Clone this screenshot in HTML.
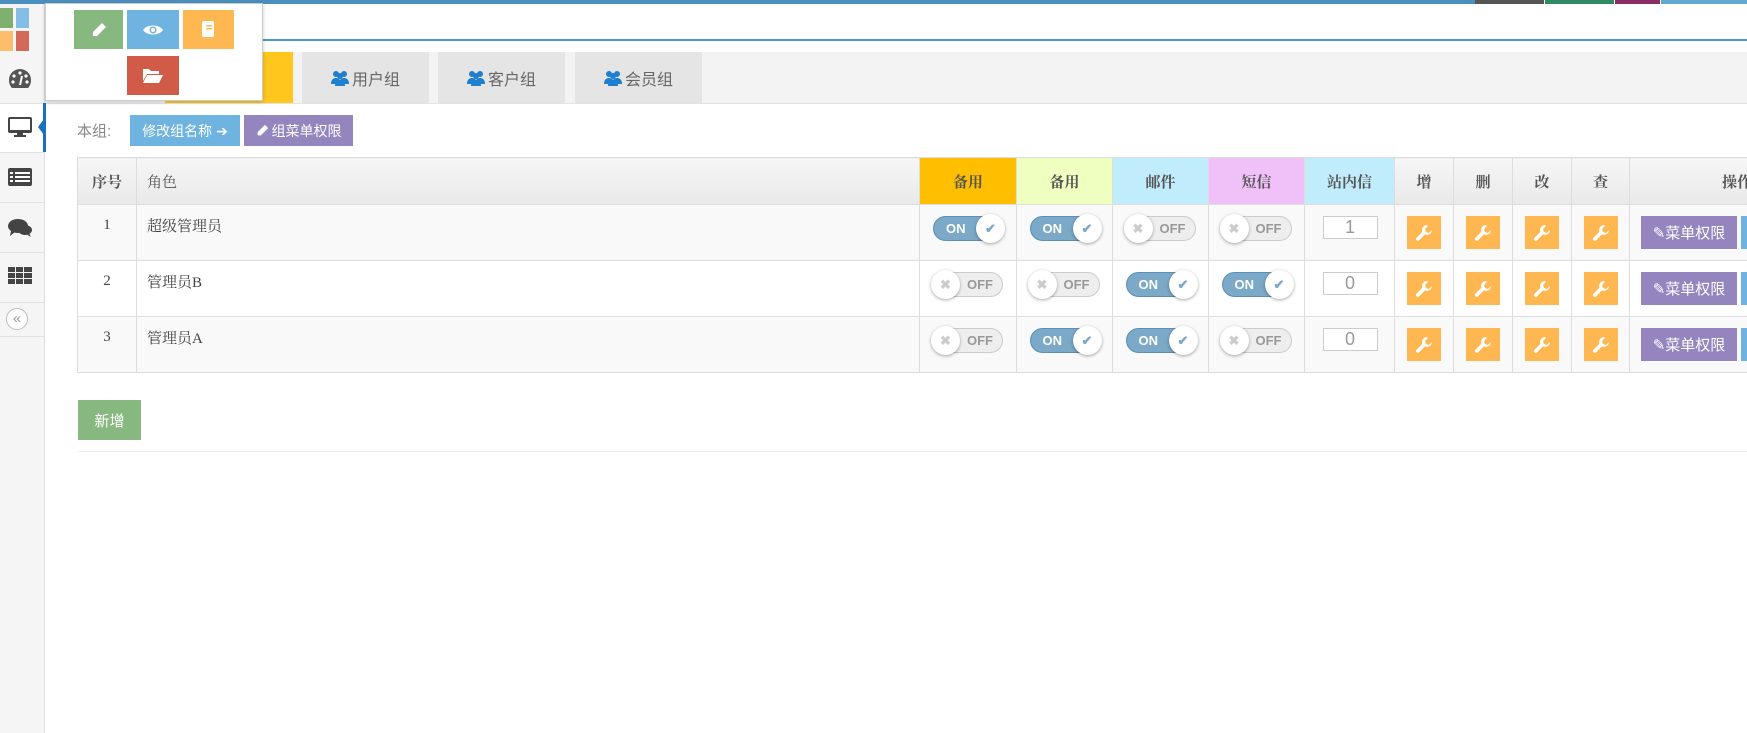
<!DOCTYPE html>
<html><head><meta charset="utf-8"><style>
*{margin:0;padding:0;box-sizing:border-box}
body{width:1747px;height:733px;overflow:hidden;background:#fff;position:relative;font-family:"Liberation Sans","Noto Sans CJK SC",sans-serif;color:#555}
.a{position:absolute}
.side{left:0;top:4px;width:45px;height:729px;background:#f5f5f5;border-right:1px solid #ddd}
.sep{left:0;width:45px;height:1px;background:#e2e2e2}
.tab{top:52px;height:51px;background:#e5e5e5;font-size:16px;color:#666;display:flex;align-items:center;justify-content:center;gap:3px}
.tw{position:absolute;left:77px;top:157px;width:1760px;overflow:visible}
table{border-collapse:collapse;font-family:"Liberation Serif","Noto Serif CJK SC",serif;font-size:15px;color:#444;table-layout:fixed;width:1752px}
td,th{border:1px solid #ddd;padding:0}
th{height:47px;background:linear-gradient(#f6f6f6,#e9e9e9);font-weight:bold;color:#555;text-align:center}
td{height:56px;vertical-align:top;text-align:center;position:relative}
tr.o td{background:#f9f9f9}
.tg{position:absolute;top:11px;left:50%;margin-left:-35px;width:70px;height:25px;border-radius:13px;font:bold 13px "Liberation Sans",sans-serif}
.on{background:#7ba9c7;color:#fff;border:1px solid #5b8fb5}
.off{background:#eee;color:#999;border:1px solid #ccc}
.kn{position:absolute;top:-3px;width:29px;height:29px;border-radius:50%;background:#fff;box-shadow:0 1px 3px rgba(0,0,0,.35);display:flex;align-items:center;justify-content:center;font-size:13px}
.on .kn{right:-3px;color:#7ba9c7}.off .kn{left:-3px;color:#ccc}
.on span{position:absolute;left:12px;top:4px}.off span{position:absolute;right:9px;top:4px}
.wr{position:absolute;top:11px;left:50%;margin-left:-17px;width:34px;height:33px;background:#ffb752;display:flex;align-items:center;justify-content:center}
.inp{position:absolute;top:11px;left:50%;margin-left:-27px;width:55px;height:23px;border:1px solid #ccc;background:#fff;font:18px "Liberation Sans",sans-serif;color:#999;line-height:21px}
.pb{position:absolute;top:11px;left:11px;width:96px;height:33px;background:#9585bf;color:#fff;font:15px "Liberation Sans","Noto Sans CJK SC",sans-serif;display:flex;align-items:center;justify-content:center;gap:2px}
.bb{position:absolute;top:11px;left:111px;width:40px;height:33px;background:#6fb3e0}
</style></head><body>
<div class="a" style="left:0;top:0;width:1475px;height:4px;background:#4a8fbf"></div>
<div class="a" style="left:1475px;top:0;width:69px;height:4px;background:#555"></div>
<div class="a" style="left:1545px;top:0;width:69px;height:4px;background:#2e8b63"></div>
<div class="a" style="left:1615px;top:0;width:45px;height:4px;background:#8b2c62"></div>
<div class="a" style="left:1661px;top:0;width:86px;height:4px;background:#62a8d0"></div>
<div class="a" style="left:45px;top:39px;width:1702px;height:2px;background:#4a9ac8"></div>
<div class="a" style="left:45px;top:52px;width:1702px;height:52px;background:#f3f3f3;border-bottom:1px solid #e3e3e3"></div>

<div class="a side"></div>
<div class="a" style="left:0;top:8px;width:13px;height:20px;background:#7fb06f"></div>
<div class="a" style="left:16px;top:8px;width:13px;height:20px;background:#84bde6"></div>
<div class="a" style="left:0;top:31px;width:13px;height:20px;background:#fdbd6a"></div>
<div class="a" style="left:16px;top:31px;width:13px;height:20px;background:#d2695a"></div>
<div class="a sep" style="top:103px"></div><div class="a sep" style="top:152px"></div><div class="a sep" style="top:202px"></div><div class="a sep" style="top:252px"></div><div class="a sep" style="top:302px"></div><div class="a sep" style="top:336px"></div>
<div class="a" style="left:0;top:104px;width:43px;height:48px;background:#fff"></div>
<div class="a" style="left:43px;top:103px;width:3px;height:49px;background:#1a6fc0"></div>
<div class="a" style="left:38px;top:119px;width:0;height:0;border-top:8px solid transparent;border-bottom:8px solid transparent;border-right:6px solid #1a6fc0"></div>
<svg class="a" style="left:8px;top:68px" width="24" height="22" viewBox="0 0 24 22"><path d="M12 1A11 11 0 0 0 1 12c0 3 1 6 3 8h16c2-2 3-5 3-8A11 11 0 0 0 12 1z" fill="#555"/><circle cx="12" cy="5" r="1.6" fill="#fff"/><circle cx="6" cy="8" r="1.6" fill="#fff"/><circle cx="18" cy="8" r="1.6" fill="#fff"/><circle cx="5" cy="14" r="1.6" fill="#fff"/><circle cx="19" cy="14" r="1.6" fill="#fff"/><path d="M12 17l2-9" stroke="#fff" stroke-width="2"/></svg>
<svg class="a" style="left:7px;top:116px" width="26" height="22" viewBox="0 0 26 22"><rect x="1" y="1" width="24" height="16" rx="2" fill="#444"/><rect x="3" y="3" width="20" height="11" fill="#fff"/><rect x="10" y="17" width="6" height="3" fill="#444"/><rect x="7" y="19" width="12" height="2" fill="#444"/></svg>
<svg class="a" style="left:8px;top:168px" width="24" height="18" viewBox="0 0 24 18"><rect x="0" y="0" width="24" height="18" rx="2" fill="#444"/><rect x="2" y="4" width="3" height="2" fill="#fff"/><rect x="7" y="4" width="15" height="2" fill="#fff"/><rect x="2" y="8" width="3" height="2" fill="#fff"/><rect x="7" y="8" width="15" height="2" fill="#fff"/><rect x="2" y="12" width="3" height="2" fill="#fff"/><rect x="7" y="12" width="15" height="2" fill="#fff"/></svg>
<svg class="a" style="left:8px;top:218px" width="25" height="20" viewBox="0 0 25 20"><ellipse cx="10" cy="8" rx="10" ry="7" fill="#444"/><path d="M3 13l-1 5 5-4z" fill="#444"/><ellipse cx="17" cy="12" rx="7" ry="5" fill="#444"/><path d="M21 15l2 4-5-3z" fill="#444"/></svg>
<svg class="a" style="left:8px;top:267px" width="24" height="18" viewBox="0 0 24 18"><g fill="#444"><rect x="0" y="0" width="7" height="5"/><rect x="8" y="0" width="7" height="5"/><rect x="16" y="0" width="8" height="5"/><rect x="0" y="6" width="7" height="5"/><rect x="8" y="6" width="7" height="5"/><rect x="16" y="6" width="8" height="5"/><rect x="0" y="12" width="7" height="5"/><rect x="8" y="12" width="7" height="5"/><rect x="16" y="12" width="8" height="5"/></g></svg>
<div class="a" style="left:6px;top:308px;width:22px;height:22px;border:1px solid #bbb;border-radius:50%;background:#fff;color:#999;font-size:15px;text-align:center;line-height:19px">«</div>

<div class="a tab" style="left:165px;width:128px;background:#ffc61e;color:#fff">管理员</div>
<div class="a tab" style="left:302px;width:127px"><svg width="18" height="16" viewBox="0 0 18 16"><g fill="#1e7fd0"><circle cx="5" cy="4" r="3"/><circle cx="13" cy="4" r="3"/><circle cx="9" cy="6" r="3"/><path d="M0 14c0-5 3-6 5-6s5 1 5 6z"/><path d="M8 14c0-5 3-6 5-6s5 1 5 6z"/><path d="M4 16c0-5 3-6 5-6s5 1 5 6z"/></g></svg>用户组</div>
<div class="a tab" style="left:438px;width:127px"><svg width="18" height="16" viewBox="0 0 18 16"><g fill="#1e7fd0"><circle cx="5" cy="4" r="3"/><circle cx="13" cy="4" r="3"/><circle cx="9" cy="6" r="3"/><path d="M0 14c0-5 3-6 5-6s5 1 5 6z"/><path d="M8 14c0-5 3-6 5-6s5 1 5 6z"/><path d="M4 16c0-5 3-6 5-6s5 1 5 6z"/></g></svg>客户组</div>
<div class="a tab" style="left:575px;width:127px"><svg width="18" height="16" viewBox="0 0 18 16"><g fill="#1e7fd0"><circle cx="5" cy="4" r="3"/><circle cx="13" cy="4" r="3"/><circle cx="9" cy="6" r="3"/><path d="M0 14c0-5 3-6 5-6s5 1 5 6z"/><path d="M8 14c0-5 3-6 5-6s5 1 5 6z"/><path d="M4 16c0-5 3-6 5-6s5 1 5 6z"/></g></svg>会员组</div>

<div class="a" style="left:45px;top:3px;width:218px;height:98px;background:#fff;border:1px solid #ccc;box-shadow:0 1px 4px rgba(0,0,0,.2)"></div>
<div class="a" style="left:74px;top:10px;width:49px;height:39px;background:#87b87f;display:flex;align-items:center;justify-content:center"><svg width="16" height="16" viewBox="0 0 16 16"><path d="M11 1l4 4-9 9H2v-4z" fill="#fff"/></svg></div>
<div class="a" style="left:127px;top:10px;width:52px;height:39px;background:#6fb3e0;display:flex;align-items:center;justify-content:center"><svg width="20" height="12" viewBox="0 0 20 12"><path d="M0 6C4 0 16 0 20 6 16 12 4 12 0 6z" fill="#fff"/><circle cx="10" cy="6" r="3.5" fill="#6fb3e0"/><circle cx="10" cy="6" r="2" fill="#fff"/></svg></div>
<div class="a" style="left:183px;top:10px;width:51px;height:39px;background:#ffb752;display:flex;align-items:center;justify-content:center"><svg width="14" height="17" viewBox="0 0 14 17"><rect x="0" y="0" width="12" height="16" rx="2" fill="#fff"/><rect x="4" y="4" width="6" height="1.5" fill="#ffb752"/><rect x="4" y="7" width="6" height="1.5" fill="#ffb752"/></svg></div>
<div class="a" style="left:127px;top:56px;width:52px;height:39px;background:#d15b47;display:flex;align-items:center;justify-content:center"><svg width="20" height="15" viewBox="0 0 20 15"><path d="M0 1h6l2 2h8v3H4L0 13z" fill="#fff"/><path d="M4 7h16l-4 8H0z" fill="#fff"/></svg></div>

<div class="a" style="left:77px;top:120px;font-size:15px;color:#888">本组:</div>
<div class="a" style="left:130px;top:115px;width:110px;height:31px;background:#6fb3e0;color:#fff;font-size:14px;display:flex;align-items:center;justify-content:center">修改组名称 ➔</div>
<div class="a" style="left:244px;top:115px;width:109px;height:31px;background:#9585bf;color:#fff;font-size:14px;display:flex;align-items:center;justify-content:center;gap:3px"><svg width="13" height="13" viewBox="0 0 16 16"><path d="M11 1l4 4-9 9H2v-4z" fill="#fff"/></svg>组菜单权限</div>

<div class="tw"><table>
<colgroup><col style="width:59px"><col style="width:783px"><col style="width:97px"><col style="width:96px"><col style="width:96px"><col style="width:96px"><col style="width:90px"><col style="width:59px"><col style="width:59px"><col style="width:59px"><col style="width:58px"><col style="width:200px"></colgroup>
<tr><th>序号</th><th style="text-align:left;padding-left:10px;font-weight:normal">角色</th><th style="background:#ffbf00">备用</th><th style="background:#eeffc0">备用</th><th style="background:#c0ecfc">邮件</th><th style="background:#f0c0f8">短信</th><th style="background:#c0ecfc">站内信</th><th>增</th><th>删</th><th>改</th><th>查</th><th style="text-align:left;padding-left:92px">操作</th></tr>
<tr class="o"><td style="padding-top:12px">1</td><td style="text-align:left;padding:10px 10px 0">超级管理员</td>
<td><div class="tg on"><span>ON</span><div class="kn">✔</div></div></td>
<td><div class="tg on"><span>ON</span><div class="kn">✔</div></div></td>
<td><div class="tg off"><span>OFF</span><div class="kn">✖</div></div></td>
<td><div class="tg off"><span>OFF</span><div class="kn">✖</div></div></td>
<td><div class="inp">1</div></td>
<td><div class="wr"></div></td><td><div class="wr"></div></td><td><div class="wr"></div></td><td><div class="wr"></div></td>
<td><div class="pb">✎菜单权限</div><div class="bb"></div></td></tr>
<tr><td style="padding-top:12px">2</td><td style="text-align:left;padding:10px 10px 0">管理员B</td>
<td><div class="tg off"><span>OFF</span><div class="kn">✖</div></div></td>
<td><div class="tg off"><span>OFF</span><div class="kn">✖</div></div></td>
<td><div class="tg on"><span>ON</span><div class="kn">✔</div></div></td>
<td><div class="tg on"><span>ON</span><div class="kn">✔</div></div></td>
<td><div class="inp">0</div></td>
<td><div class="wr"></div></td><td><div class="wr"></div></td><td><div class="wr"></div></td><td><div class="wr"></div></td>
<td><div class="pb">✎菜单权限</div><div class="bb"></div></td></tr>
<tr class="o"><td style="padding-top:12px">3</td><td style="text-align:left;padding:10px 10px 0">管理员A</td>
<td><div class="tg off"><span>OFF</span><div class="kn">✖</div></div></td>
<td><div class="tg on"><span>ON</span><div class="kn">✔</div></div></td>
<td><div class="tg on"><span>ON</span><div class="kn">✔</div></div></td>
<td><div class="tg off"><span>OFF</span><div class="kn">✖</div></div></td>
<td><div class="inp">0</div></td>
<td><div class="wr"></div></td><td><div class="wr"></div></td><td><div class="wr"></div></td><td><div class="wr"></div></td>
<td><div class="pb">✎菜单权限</div><div class="bb"></div></td></tr>
</table></div>

<div class="a" style="left:78px;top:400px;width:63px;height:40px;background:#87b87f;color:#fff;font-size:15px;display:flex;align-items:center;justify-content:center">新增</div>
<div class="a" style="left:78px;top:451px;width:1669px;height:1px;background:#eee"></div>
<script>
document.querySelectorAll('.wr').forEach(function(e){e.innerHTML='<svg width="18" height="18" viewBox="0 0 18 18"><path d="M12 1a5 5 0 0 0-4.6 6.8L1.5 13.7a1.8 1.8 0 0 0 2.6 2.6l5.9-5.9A5 5 0 0 0 17 6l-3 3-3-1-1-3 3-3z" fill="#fff"/></svg>';});
</script>
</body></html>
